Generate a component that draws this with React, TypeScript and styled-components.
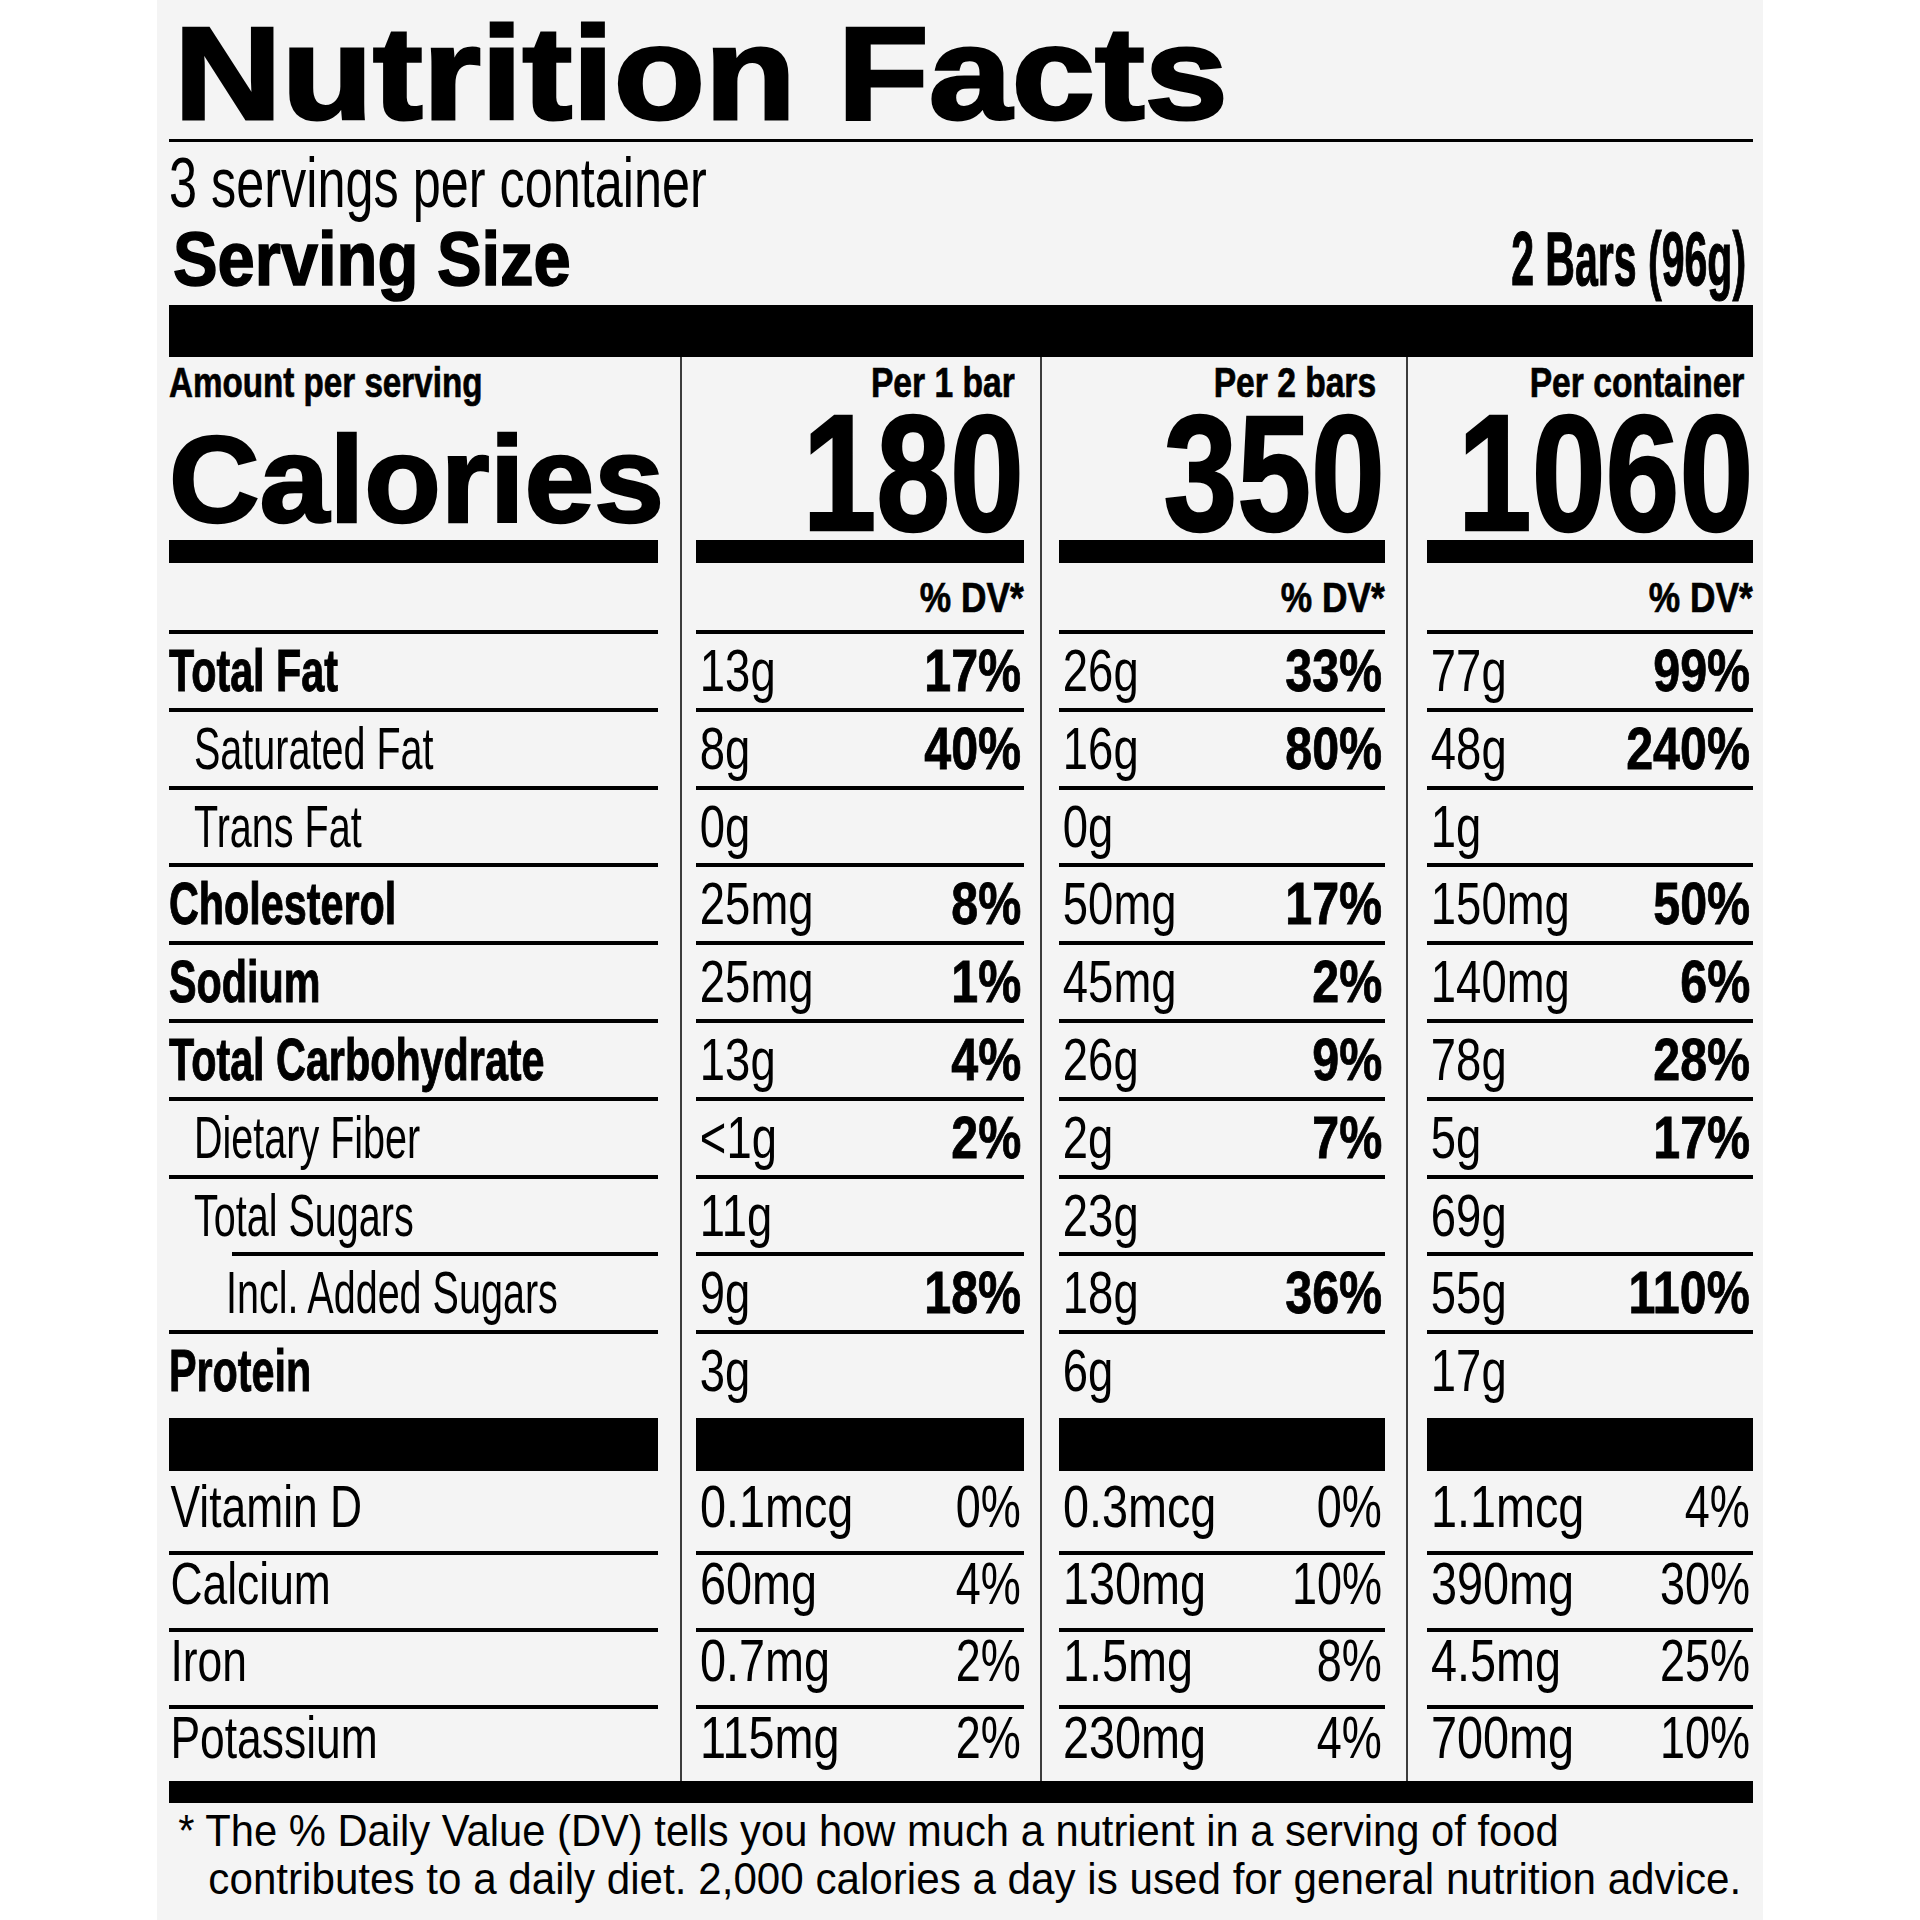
import React from "react";
import styled, { createGlobalStyle } from "styled-components";

const GlobalStyle = createGlobalStyle`
  html, body {
    margin: 0;
    padding: 0;
    background: #ffffff;
  }
  body {
    font-family: "Liberation Sans", Arial, sans-serif;
    color: #000;
  }
`;

type Fact = { name: string; bold?: boolean; indent?: number; inset?: number };
type ColumnData = {
  per: string;
  calories: string;
  facts: [string, string][];
  vitamins: [string, string][];
};

const FACTS: Fact[] = [
  { name: "Total Fat", bold: true },
  { name: "Saturated Fat", indent: 25 },
  { name: "Trans Fat", indent: 25 },
  { name: "Cholesterol", bold: true },
  { name: "Sodium", bold: true },
  { name: "Total Carbohydrate", bold: true },
  { name: "Dietary Fiber", indent: 25 },
  { name: "Total Sugars", indent: 25 },
  { name: "Incl. Added Sugars", inset: 63, indent: -6 },
  { name: "Protein", bold: true },
];

const VITAMINS = ["Vitamin D", "Calcium", "Iron", "Potassium"];

const COLUMNS: ColumnData[] = [
  {
    per: "Per 1 bar",
    calories: "180",
    facts: [
      ["13g", "17%"],
      ["8g", "40%"],
      ["0g", ""],
      ["25mg", "8%"],
      ["25mg", "1%"],
      ["13g", "4%"],
      ["<1g", "2%"],
      ["11g", ""],
      ["9g", "18%"],
      ["3g", ""],
    ],
    vitamins: [
      ["0.1mcg", "0%"],
      ["60mg", "4%"],
      ["0.7mg", "2%"],
      ["115mg", "2%"],
    ],
  },
  {
    per: "Per 2 bars",
    calories: "350",
    facts: [
      ["26g", "33%"],
      ["16g", "80%"],
      ["0g", ""],
      ["50mg", "17%"],
      ["45mg", "2%"],
      ["26g", "9%"],
      ["2g", "7%"],
      ["23g", ""],
      ["18g", "36%"],
      ["6g", ""],
    ],
    vitamins: [
      ["0.3mcg", "0%"],
      ["130mg", "10%"],
      ["1.5mg", "8%"],
      ["230mg", "4%"],
    ],
  },
  {
    per: "Per container",
    calories: "1060",
    facts: [
      ["77g", "99%"],
      ["48g", "240%"],
      ["1g", ""],
      ["150mg", "50%"],
      ["140mg", "6%"],
      ["78g", "28%"],
      ["5g", "17%"],
      ["69g", ""],
      ["55g", "110%"],
      ["17g", ""],
    ],
    vitamins: [
      ["1.1mcg", "4%"],
      ["390mg", "30%"],
      ["4.5mg", "25%"],
      ["700mg", "10%"],
    ],
  },
];

// column paddings so the rules line up with the printed label
const COL_PAD = [
  { pl: 0, pr: 22 },
  { pl: 14, pr: 16 },
  { pl: 17, pr: 21 },
  { pl: 19, pr: 0 },
];

const Page = styled.div`
  width: 1920px;
  height: 1920px;
  overflow: hidden;
  background: #ffffff;
`;

const Panel = styled.section`
  margin-left: 157px;
  width: 1606px;
  height: 1920px;
  box-sizing: border-box;
  padding: 0 10px 0 12px;
  background: #f4f4f4;
`;

const Title = styled.h1`
  margin: 0 0 0 5px;
  height: 139px;
  font-size: 131px;
  line-height: 147px;
  font-weight: 700;
  white-space: nowrap;
  -webkit-text-stroke: 3px #000;
  transform: scaleX(1.14);
  transform-origin: left center;
`;

const Rule = styled.div`
  height: 3px;
  background: #000;
`;

const Servings = styled.div`
  margin-top: 6px;
  font-size: 70px;
  line-height: 70px;
  white-space: nowrap;
  transform: scaleX(0.72);
  transform-origin: left center;
`;

const SizeRow = styled.div`
  margin-top: 3px;
  display: flex;
  justify-content: space-between;
  align-items: baseline;
  font-size: 76px;
  line-height: 76px;
  font-weight: 700;
`;

const SizeLabel = styled.span`
  margin-left: 4px;
  white-space: nowrap;
  -webkit-text-stroke: 1.6px #000;
  transform: scaleX(0.88);
  transform-origin: left center;
`;

const SizeValue = styled.span`
  margin-right: 7px;
  white-space: nowrap;
  -webkit-text-stroke: 1.2px #000;
  transform: scaleX(0.54);
  transform-origin: right center;
`;

const Bar = styled.div<{ $h: number; $top?: number }>`
  height: ${(p) => p.$h}px;
  margin-top: ${(p) => p.$top ?? 0}px;
  background: #000;
`;

const Facts = styled.div`
  display: grid;
  grid-template-columns: 511px 360px 366px minmax(0, 1fr);
  height: 1424px;
`;

const Column = styled.div<{ $divider: boolean; $pl: number; $pr: number }>`
  min-width: 0;
  display: flex;
  flex-direction: column;
  border-left: ${(p) => (p.$divider ? "2px solid #3c3c3c" : "none")};
  padding: 0 ${(p) => p.$pr}px 0 ${(p) => p.$pl}px;
`;

const Head = styled.div`
  height: 183px;
  box-sizing: border-box;
  padding-top: 5px;
  display: flex;
  flex-direction: column;
`;

const SmallHead = styled.div<{ $right?: boolean }>`
  align-self: ${(p) => (p.$right ? "flex-end" : "flex-start")};
  font-size: 42px;
  line-height: 42px;
  font-weight: 700;
  white-space: nowrap;
  -webkit-text-stroke: 0.7px #000;
  margin-right: ${(p) => (p.$right ? 9 : 0)}px;
  transform: scaleX(${(p) => (p.$right ? 0.8 : 0.79)});
  transform-origin: ${(p) => (p.$right ? "right" : "left")} center;
`;

const CaloriesWord = styled.div`
  margin-top: 12px;
  font-size: 123px;
  line-height: 128px;
  font-weight: 700;
  white-space: nowrap;
  -webkit-text-stroke: 2.5px #000;
  transform: scaleX(1.02);
  transform-origin: left center;
`;

const BigNumber = styled.div`
  align-self: flex-end;
  margin-top: 5px;
  font-size: 166px;
  line-height: 128px;
  font-weight: 700;
  white-space: nowrap;
  -webkit-text-stroke: 2.5px #000;
  transform: scaleX(0.8);
  transform-origin: right center;
`;

const DvRow = styled.div`
  height: 67px;
  box-sizing: border-box;
  padding-top: 14px;
  display: flex;
  justify-content: flex-end;
`;

const DvLabel = styled.span`
  font-size: 42px;
  line-height: 42px;
  font-weight: 700;
  white-space: nowrap;
  -webkit-text-stroke: 0.7px #000;
  transform: scaleX(0.84);
  transform-origin: right center;
`;

const FactRow = styled.div<{ $inset?: number }>`
  height: 77.8px;
  box-sizing: border-box;
  margin-left: ${(p) => p.$inset ?? 0}px;
  border-top: 4px solid #000;
  padding-top: 8px;
  display: flex;
  justify-content: space-between;
  align-items: baseline;
  font-size: 59px;
  line-height: 59px;
`;

const Nutrient = styled.span<{ $bold?: boolean; $indent?: number }>`
  margin-left: ${(p) => p.$indent ?? 0}px;
  font-weight: ${(p) => (p.$bold ? 700 : 400)};
  -webkit-text-stroke: ${(p) => (p.$bold ? "1px #000" : "0")};
  white-space: nowrap;
  transform: scaleX(${(p) => (p.$bold ? 0.7 : 0.67)});
  transform-origin: left center;
`;

const Amount = styled.span`
  padding-left: 5px;
  white-space: nowrap;
  transform: scaleX(0.77);
  transform-origin: left center;
`;

const Percent = styled.span`
  margin-right: 3px;
  font-weight: 700;
  white-space: nowrap;
  -webkit-text-stroke: 0.8px #000;
  transform: scaleX(0.82);
  transform-origin: right center;
`;

const VitaminList = styled.div`
  padding-top: 7px;
  display: flex;
  flex-direction: column;
`;

const VitaminRow = styled.div<{ $last?: boolean }>`
  height: ${(p) => (p.$last ? 72 : 77)}px;
  box-sizing: border-box;
  border-bottom: ${(p) => (p.$last ? "none" : "4px solid #000")};
  display: flex;
  justify-content: space-between;
  align-items: baseline;
  font-size: 60px;
  line-height: 58px;
`;

const VitaminName = styled.span`
  padding-left: 2px;
  white-space: nowrap;
  transform: scaleX(0.74);
  transform-origin: left center;
`;

const VitaminAmount = styled.span`
  padding-left: 5px;
  white-space: nowrap;
  transform: scaleX(0.78);
  transform-origin: left center;
`;

const VitaminPercent = styled.span`
  margin-right: 3px;
  white-space: nowrap;
  transform: scaleX(0.75);
  transform-origin: right center;
`;

const Footnote = styled.div`
  margin-top: 4px;
  font-size: 45px;
  line-height: 48px;
`;

const FootLine = styled.div<{ $indent: number; $scale: number }>`
  padding-left: ${(p) => p.$indent}px;
  white-space: nowrap;
  transform: scaleX(${(p) => p.$scale});
  transform-origin: left center;
`;

const LabelColumn: React.FC = () => (
  <Column $divider={false} $pl={COL_PAD[0].pl} $pr={COL_PAD[0].pr}>
    <Head>
      <SmallHead>Amount per serving</SmallHead>
      <CaloriesWord>Calories</CaloriesWord>
    </Head>
    <Bar $h={23} />
    <DvRow />
    {FACTS.map((f) => (
      <FactRow key={f.name} $inset={f.inset}>
        <Nutrient $bold={f.bold} $indent={f.indent}>
          {f.name}
        </Nutrient>
      </FactRow>
    ))}
    <Bar $h={53} $top={10} />
    <VitaminList>
      {VITAMINS.map((v, i) => (
        <VitaminRow key={v} $last={i === VITAMINS.length - 1}>
          <VitaminName>{v}</VitaminName>
        </VitaminRow>
      ))}
    </VitaminList>
  </Column>
);

const ValueColumn: React.FC<{ data: ColumnData; index: number }> = ({
  data,
  index,
}) => {
  const pad = COL_PAD[index];
  return (
    <Column $divider $pl={pad.pl} $pr={pad.pr}>
      <Head>
        <SmallHead $right>{data.per}</SmallHead>
        <BigNumber>{data.calories}</BigNumber>
      </Head>
      <Bar $h={23} />
      <DvRow>
        <DvLabel>% DV*</DvLabel>
      </DvRow>
      {data.facts.map(([amount, pct], i) => (
        <FactRow key={FACTS[i].name}>
          <Amount>{amount}</Amount>
          {pct && <Percent>{pct}</Percent>}
        </FactRow>
      ))}
      <Bar $h={53} $top={10} />
      <VitaminList>
        {data.vitamins.map(([amount, pct], i) => (
          <VitaminRow key={VITAMINS[i]} $last={i === data.vitamins.length - 1}>
            <VitaminAmount>{amount}</VitaminAmount>
            <VitaminPercent>{pct}</VitaminPercent>
          </VitaminRow>
        ))}
      </VitaminList>
    </Column>
  );
};

export default function App() {
  return (
    <Page>
      <GlobalStyle />
      <Panel>
        <Title>Nutrition Facts</Title>
        <Rule />
        <Servings>3 servings per container</Servings>
        <SizeRow>
          <SizeLabel>Serving Size</SizeLabel>
          <SizeValue>2 Bars (96g)</SizeValue>
        </SizeRow>
        <Bar $h={52} $top={8} />
        <Facts>
          <LabelColumn />
          {COLUMNS.map((col, i) => (
            <ValueColumn key={col.per} data={col} index={i + 1} />
          ))}
        </Facts>
        <Bar $h={22} />
        <Footnote>
          <FootLine $indent={10} $scale={0.927}>
            * The % Daily Value (DV) tells you how much a nutrient in a serving
            of food
          </FootLine>
          <FootLine $indent={42} $scale={0.937}>
            contributes to a daily diet. 2,000 calories a day is used for general
            nutrition advice.
          </FootLine>
        </Footnote>
      </Panel>
    </Page>
  );
}
